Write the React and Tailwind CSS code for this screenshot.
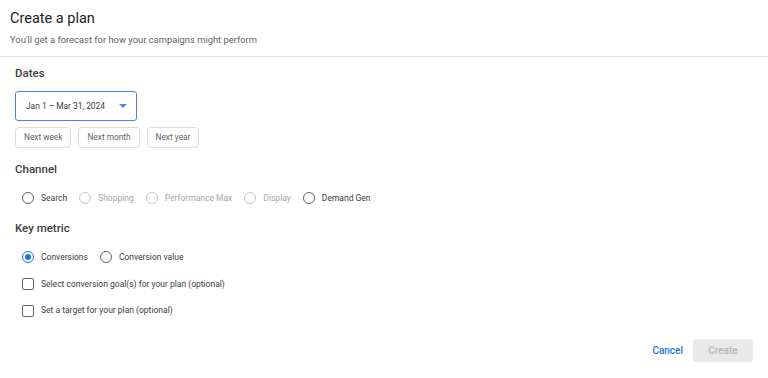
import React from "react";

function Radio({ label, disabled, checked }) {
  return (
    <div className="flex items-center">
      {checked ? (
        <span className="w-[12px] h-[12px] rounded-full border-[1.5px] border-[#1a73e8] flex items-center justify-center">
          <span className="w-[6px] h-[6px] rounded-full bg-[#1a73e8]" />
        </span>
      ) : (
        <span
          className={
            disabled
              ? "w-[12px] h-[12px] rounded-full border-[1.5px] border-[#c4c4c4]"
              : "w-[12px] h-[12px] rounded-full border-[1.5px] border-[#5f6368]"
          }
        />
      )}
      <span
        className={
          disabled
            ? "ml-[7px] text-[8.5px] text-[#a8a8a8]"
            : "ml-[7px] text-[8.5px] text-[#3c4043]"
        }
      >
        {label}
      </span>
    </div>
  );
}

function Check({ label }) {
  return (
    <div className="flex items-center">
      <span className="w-[12px] h-[12px] rounded-[2px] border-[1.5px] border-[#5f6368]" />
      <span className="ml-[7px] text-[8.5px] text-[#3c4043]">{label}</span>
    </div>
  );
}

function Chip({ children }) {
  return (
    <button className="h-[21px] px-[8px] rounded-[4px] border border-[#dadce0] text-[8.3px] text-[#5f6368] bg-white">
      {children}
    </button>
  );
}

export default function App() {
  return (
    <div
      className="w-[768px] h-[378px] bg-white flex flex-col overflow-hidden"
      style={{ fontFamily: "Roboto, 'Noto Sans', sans-serif" }}
    >
      <div className="pl-[10px] pt-[9px] h-[57px] border-b border-[#e3e3e3] shrink-0">
        <div className="text-[14.5px] leading-[20px] text-[#202124]">Create a plan</div>
        <div className="mt-[4px] text-[9.4px] leading-[14px] text-[#5f6368]">
          You'll get a forecast for how your campaigns might perform
        </div>
      </div>

      <div className="pl-[15px] pt-[8px] flex-1 flex flex-col">
        <div className="text-[11.5px] leading-[16px] font-medium text-[#3c4043]">Dates</div>
        <div className="mt-[10px] w-[122px] h-[30px] rounded-[3px] border-[1.5px] border-[#4285f4] flex items-center justify-between pl-[10px] pr-[9px]">
          <span className="text-[8.4px] text-[#3c4043]">Jan 1 – Mar 31, 2024</span>
          <svg width="8" height="4" viewBox="0 0 8 4">
            <path d="M0 0 L8 0 L4 4 Z" fill="#4285f4" />
          </svg>
        </div>
        <div className="mt-[6px] flex gap-[7px]">
          <Chip>Next week</Chip>
          <Chip>Next month</Chip>
          <Chip>Next year</Chip>
        </div>

        <div className="mt-[13px] text-[11.5px] leading-[16px] font-medium text-[#3c4043]">Channel</div>
        <div className="mt-[15px] pl-[7px] flex gap-[12px]">
          <Radio label="Search" />
          <Radio label="Shopping" disabled />
          <Radio label="Performance Max" disabled />
          <Radio label="Display" disabled />
          <Radio label="Demand Gen" />
        </div>

        <div className="mt-[15px] text-[11.5px] leading-[16px] font-medium text-[#3c4043]">Key metric</div>
        <div className="mt-[15px] pl-[7px] flex gap-[12px]">
          <Radio label="Conversions" checked />
          <Radio label="Conversion value" />
        </div>
        <div className="mt-[14px] pl-[7px]">
          <Check label="Select conversion goal(s) for your plan (optional)" />
        </div>
        <div className="mt-[14px] pl-[7px]">
          <Check label="Set a target for your plan (optional)" />
        </div>

        <div className="mt-auto mb-[16px] mr-[15px] flex justify-end items-center gap-[9px]">
          <span className="text-[10px] text-[#1a73e8] font-medium px-[1px]">Cancel</span>
          <button className="w-[60px] h-[23px] rounded-[3px] bg-[#e9e9e9] text-[10px] font-medium text-[#b5b5b5]">
            Create
          </button>
        </div>
      </div>
    </div>
  );
}
